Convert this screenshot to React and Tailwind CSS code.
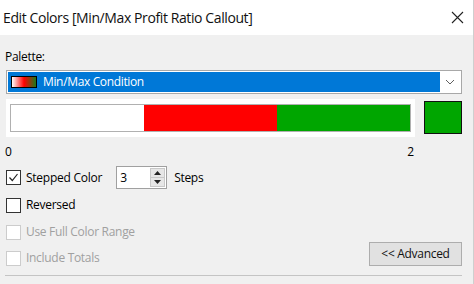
import React from "react";

function Check({ checked, disabled }) {
  return (
    <div
      className={
        "w-[15px] h-[15px] border bg-white flex items-center justify-center shrink-0 " +
        (disabled ? "border-[#cccccc]" : "border-[#333333]")
      }
    >
      {checked && (
        <svg width="11" height="11" viewBox="0 0 11 11">
          <path d="M1.5 5.5 L4.3 8.5 L9.5 2" fill="none" stroke="#222" strokeWidth="1.2" />
        </svg>
      )}
    </div>
  );
}

export default function App() {
  return (
    <div className="w-[474px] h-[284px] bg-[#f0f0f0] flex flex-col font-['Open_Sans',sans-serif] text-[12px] leading-none text-black overflow-hidden border-r border-[#cfcfcf]">
      <div className="h-[35px] bg-white flex items-center justify-between pl-[3px] pr-[8px] shrink-0">
        <span className="text-[14px] tracking-[-0.4px] text-[#111]">Edit Colors [Min/Max Profit Ratio Callout]</span>
        <svg width="13" height="13" viewBox="0 0 13 13" className="mr-[1px]">
          <path d="M1 1 L12 12 M12 1 L1 12" stroke="#222" strokeWidth="1.1" fill="none" />
        </svg>
      </div>
      <div className="flex flex-col pl-[6px] pr-[11px]">
        <div className="mt-[13px] h-[18px] flex items-center -ml-[1px] tracking-[-0.3px]">Palette:</div>
        <div className="mt-[4px] h-[24px] border border-[#a8a8a8] bg-white flex items-stretch p-[1px]">
          <div className="flex-1 bg-[#0078d7] flex items-center pl-[3px]">
            <div className="w-[26px] h-[12px] border border-black bg-[linear-gradient(to_right,#ffffff,#ff0000_50%,#1a7a1a)]" />
            <span className="ml-[6px] text-white tracking-[-0.35px]">Min/Max Condition</span>
          </div>
          <div className="w-[20px] flex items-center justify-center">
            <svg width="10" height="6" viewBox="0 0 10 6">
              <path d="M1 1 L5 5 L9 1" fill="none" stroke="#606060" strokeWidth="1" />
            </svg>
          </div>
        </div>
        <div className="mt-[5px] flex items-start">
          <div className="w-[409px] h-[38px] bg-white flex items-center px-[4px]">
            <div className="flex-1 h-[28px] border border-[#b0b0b0] flex">
              <div className="flex-1 bg-white" />
              <div className="flex-1 bg-[#ff0000]" />
              <div className="flex-1 bg-[#00a600]" />
            </div>
          </div>
          <div className="ml-auto mt-[2px] w-[38px] h-[33px] border border-[#111] bg-[#00a600]" />
        </div>
        <div className="mt-[8px] h-[14px] w-[410px] flex items-center justify-between -ml-[1px]">
          <span>0</span>
          <span className="mr-[1px]">2</span>
        </div>
        <div className="mt-[7px] h-[23px] flex items-center">
          <Check checked />
          <span className="ml-[5px] tracking-[-0.25px]">Stepped Color</span>
          <div className="ml-[14px] w-[51px] h-[23px] border border-[#a0a0a0] bg-white flex">
            <span className="flex-1 flex items-center pl-[3px]">3</span>
            <div className="w-[16px] flex flex-col py-[1px] pr-[1px]">
              <div className="flex-1 bg-[#e6e6e6] border border-[#c8c8c8] flex items-center justify-center">
                <svg width="7" height="4" viewBox="0 0 7 4"><path d="M0 4 L3.5 0 L7 4 Z" fill="#222" /></svg>
              </div>
              <div className="flex-1 bg-[#e6e6e6] border border-t-0 border-[#c8c8c8] flex items-center justify-center">
                <svg width="7" height="4" viewBox="0 0 7 4"><path d="M0 0 L3.5 4 L7 0 Z" fill="#222" /></svg>
              </div>
            </div>
          </div>
          <span className="ml-[7px] tracking-[-0.3px]">Steps</span>
        </div>
        <div className="mt-[6px] h-[20px] flex items-center">
          <Check />
          <span className="ml-[5px] tracking-[-0.3px]">Reversed</span>
        </div>
        <div className="mt-[7px] h-[20px] flex items-center text-[#a0a0a0]">
          <Check disabled />
          <span className="ml-[5px] tracking-[-0.3px]">Use Full Color Range</span>
        </div>
        <div className="h-[24px] flex items-center text-[#a0a0a0]">
          <div className="mt-[8px] flex items-center">
            <Check disabled />
            <span className="ml-[5px] tracking-[-0.3px]">Include Totals</span>
          </div>
          <div className="ml-auto w-[93px] h-[24px] bg-[#e1e1e1] border border-[#adadad] flex items-center justify-center text-[#111] tracking-[-0.3px]">
            &lt;&lt; Advanced
          </div>
        </div>
        <div className="mt-[9px] border-t border-[#c4c4c4] -ml-[1px]" />
      </div>
    </div>
  );
}
